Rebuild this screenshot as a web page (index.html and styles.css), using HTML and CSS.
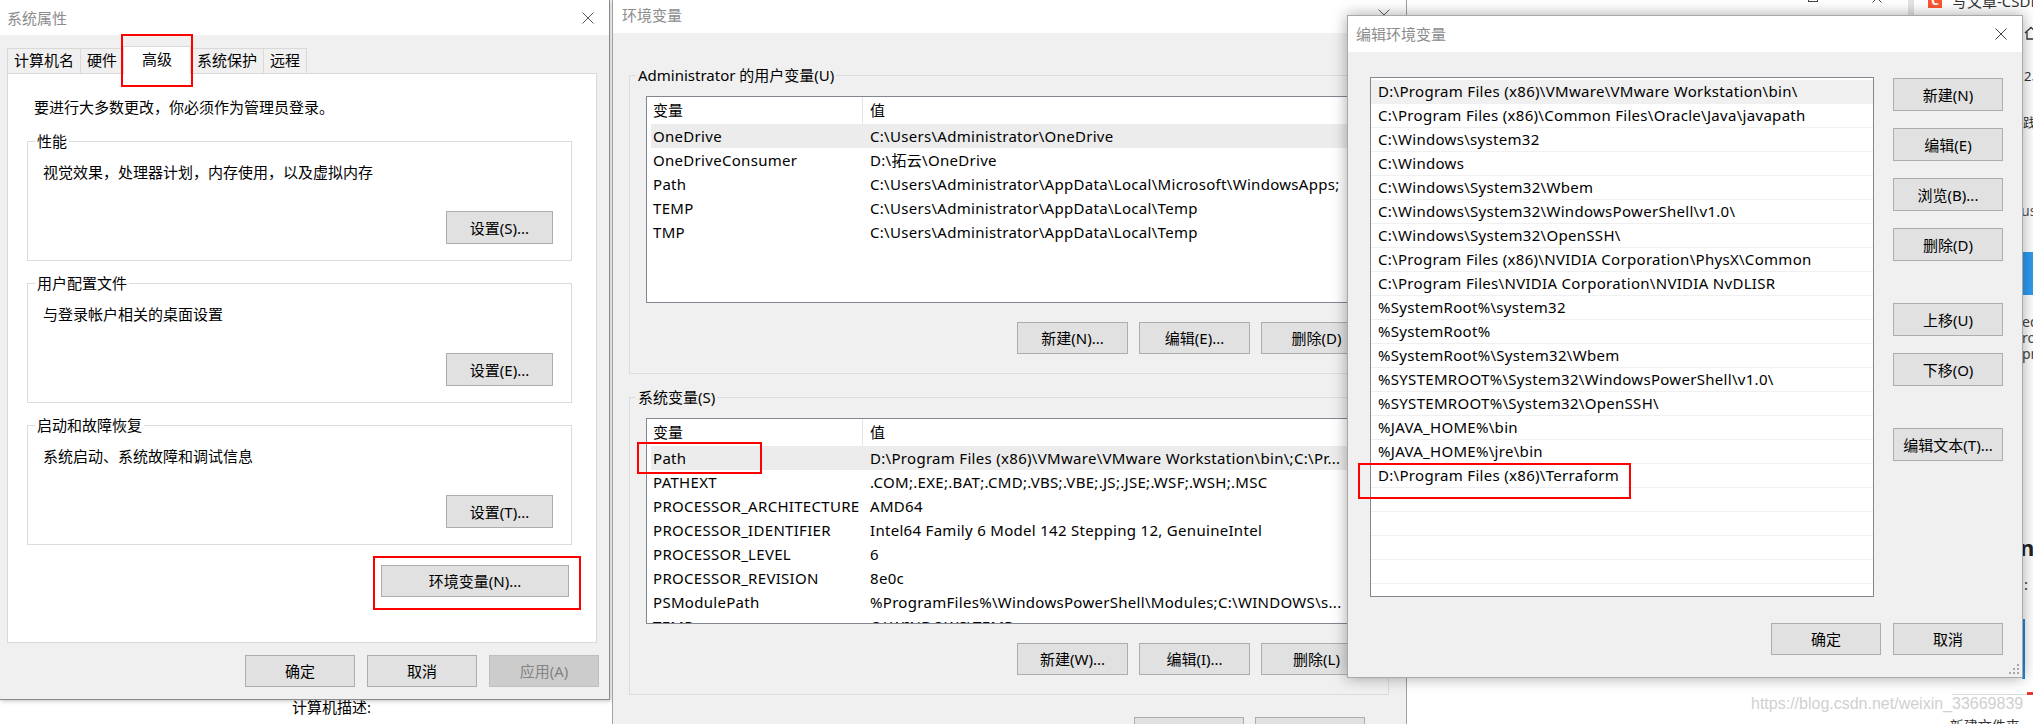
FILE: index.html
```html
<!DOCTYPE html>
<html lang="zh-CN">
<head>
<meta charset="utf-8">
<title>环境变量</title>
<link rel="stylesheet" href="styles.css">
</head>
<body>
<div class="desktop">

  <div class="bg-browser">
    <span class="frag frag-max"></span>
    <svg class="frag frag-x" viewBox="0 0 10 10"><path d="M0.5 0.5L9.5 9.5M9.5 0.5L0.5 9.5" stroke="#444" stroke-width="1" fill="none"/></svg>
    <span class="frag frag-div"></span>
    <span class="frag frag-tab"><span class="csdn-icon">C</span>写文章-CSDN博客</span>
    <svg class="frag frag-home" viewBox="0 0 16 16"><path d="M2 8L8 2.5L14 8M4 7V14H12V7" stroke="#333" stroke-width="1.3" fill="none"/></svg>
    <span class="frag frag-t1">2、</span>
    <span class="frag frag-t2">践</span>
    <span class="frag frag-t3">ush</span>
    <span class="frag frag-blue"></span>
    <span class="frag frag-t4">ed<br>ror<br>pre</span>
    <span class="frag frag-t5">nc</span>
    <span class="frag frag-t6">:</span>
    <span class="frag frag-blueline"></span>
    <span class="frag frag-line"></span>
    <span class="frag frag-red"></span>
    <span class="frag frag-t7">▪ 新建文件夹</span>
  </div>

  <div class="bg-caption">计算机描述:</div>
  <div class="watermark">https://blog.csdn.net/weixin_33669839</div>

  <!-- 系统属性 -->
  <div class="win win-sys">
    <div class="titlebar">
      <span class="title">系统属性</span>
      <svg class="close" viewBox="0 0 12 12"><path d="M0.5 0.5L11.5 11.5M11.5 0.5L0.5 11.5" stroke="#555" stroke-width="1" fill="none"/></svg>
    </div>
    <div class="sys-body">
      <div class="tabs">
        <div class="tab">计算机名</div>
        <div class="tab">硬件</div>
        <div class="tab tab-active">高级</div>
        <div class="tab">系统保护</div>
        <div class="tab">远程</div>
      </div>
      <div class="tab-panel">
        <div class="notice">要进行大多数更改，你必须作为管理员登录。</div>
        <fieldset class="group">
          <legend>性能</legend>
          <div>视觉效果，处理器计划，内存使用，以及虚拟内存</div>
          <button class="btn">设置(S)...</button>
        </fieldset>
        <fieldset class="group">
          <legend>用户配置文件</legend>
          <div>与登录帐户相关的桌面设置</div>
          <button class="btn">设置(E)...</button>
        </fieldset>
        <fieldset class="group">
          <legend>启动和故障恢复</legend>
          <div>系统启动、系统故障和调试信息</div>
          <button class="btn">设置(T)...</button>
        </fieldset>
        <button class="btn env-btn">环境变量(N)...</button>
      </div>
      <div class="sys-footer">
        <button class="btn">确定</button>
        <button class="btn">取消</button>
        <button class="btn btn-disabled">应用(A)</button>
      </div>
    </div>
  </div>

  <!-- 环境变量 -->
  <div class="win win-env">
    <div class="titlebar">
      <span class="title">环境变量</span>
      <svg class="close" viewBox="0 0 12 12"><path d="M0.5 0.5L11.5 11.5M11.5 0.5L0.5 11.5" stroke="#555" stroke-width="1" fill="none"/></svg>
    </div>
    <div class="env-body">
      <fieldset class="env-group">
        <legend>Administrator 的用户变量(U)</legend>
        <div class="varlist">
          <div class="var-head"><div class="col-name">变量</div><div class="col-value">值</div></div>
          <div class="var-row selected"><div class="col-name">OneDrive</div><div class="col-value">C:\Users\Administrator\OneDrive</div></div>
          <div class="var-row"><div class="col-name">OneDriveConsumer</div><div class="col-value">D:\拓云\OneDrive</div></div>
          <div class="var-row"><div class="col-name">Path</div><div class="col-value">C:\Users\Administrator\AppData\Local\Microsoft\WindowsApps;</div></div>
          <div class="var-row"><div class="col-name">TEMP</div><div class="col-value">C:\Users\Administrator\AppData\Local\Temp</div></div>
          <div class="var-row"><div class="col-name">TMP</div><div class="col-value">C:\Users\Administrator\AppData\Local\Temp</div></div>
        </div>
        <div class="env-actions">
          <button class="btn">新建(N)...</button>
          <button class="btn">编辑(E)...</button>
          <button class="btn">删除(D)</button>
        </div>
      </fieldset>
      <fieldset class="env-group">
        <legend>系统变量(S)</legend>
        <div class="varlist varlist-sys">
          <div class="var-head"><div class="col-name">变量</div><div class="col-value">值</div></div>
          <div class="var-row selected"><div class="col-name">Path</div><div class="col-value">D:\Program Files (x86)\VMware\VMware Workstation\bin\;C:\Pr...</div></div>
          <div class="var-row"><div class="col-name">PATHEXT</div><div class="col-value">.COM;.EXE;.BAT;.CMD;.VBS;.VBE;.JS;.JSE;.WSF;.WSH;.MSC</div></div>
          <div class="var-row"><div class="col-name">PROCESSOR_ARCHITECTURE</div><div class="col-value">AMD64</div></div>
          <div class="var-row"><div class="col-name">PROCESSOR_IDENTIFIER</div><div class="col-value">Intel64 Family 6 Model 142 Stepping 12, GenuineIntel</div></div>
          <div class="var-row"><div class="col-name">PROCESSOR_LEVEL</div><div class="col-value">6</div></div>
          <div class="var-row"><div class="col-name">PROCESSOR_REVISION</div><div class="col-value">8e0c</div></div>
          <div class="var-row"><div class="col-name">PSModulePath</div><div class="col-value">%ProgramFiles%\WindowsPowerShell\Modules;C:\WINDOWS\s...</div></div>
          <div class="var-row"><div class="col-name">TEMP</div><div class="col-value">C:\WINDOWS\TEMP</div></div>
        </div>
        <div class="env-actions">
          <button class="btn">新建(W)...</button>
          <button class="btn">编辑(I)...</button>
          <button class="btn">删除(L)</button>
        </div>
      </fieldset>
      <div class="env-footer">
        <button class="btn">确定</button>
        <button class="btn">取消</button>
      </div>
    </div>
  </div>

  <!-- 编辑环境变量 -->
  <div class="win win-edit">
    <div class="titlebar">
      <span class="title">编辑环境变量</span>
      <svg class="close" viewBox="0 0 12 12"><path d="M0.5 0.5L11.5 11.5M11.5 0.5L0.5 11.5" stroke="#444" stroke-width="1" fill="none"/></svg>
    </div>
    <div class="edit-body">
      <div class="edit-main">
        <div class="pathlist">
          <div class="path-row selected">D:\Program Files (x86)\VMware\VMware Workstation\bin\</div>
          <div class="path-row">C:\Program Files (x86)\Common Files\Oracle\Java\javapath</div>
          <div class="path-row">C:\Windows\system32</div>
          <div class="path-row">C:\Windows</div>
          <div class="path-row">C:\Windows\System32\Wbem</div>
          <div class="path-row">C:\Windows\System32\WindowsPowerShell\v1.0\</div>
          <div class="path-row">C:\Windows\System32\OpenSSH\</div>
          <div class="path-row">C:\Program Files (x86)\NVIDIA Corporation\PhysX\Common</div>
          <div class="path-row">C:\Program Files\NVIDIA Corporation\NVIDIA NvDLISR</div>
          <div class="path-row">%SystemRoot%\system32</div>
          <div class="path-row">%SystemRoot%</div>
          <div class="path-row">%SystemRoot%\System32\Wbem</div>
          <div class="path-row">%SYSTEMROOT%\System32\WindowsPowerShell\v1.0\</div>
          <div class="path-row">%SYSTEMROOT%\System32\OpenSSH\</div>
          <div class="path-row">%JAVA_HOME%\bin</div>
          <div class="path-row">%JAVA_HOME%\jre\bin</div>
          <div class="path-row">D:\Program Files (x86)\Terraform</div>
          <div class="path-row"></div>
          <div class="path-row"></div>
          <div class="path-row"></div>
          <div class="path-row"></div>
        </div>
        <div class="btn-col">
          <button class="btn">新建(N)</button>
          <button class="btn">编辑(E)</button>
          <button class="btn">浏览(B)...</button>
          <button class="btn">删除(D)</button>
          <button class="btn gap-before">上移(U)</button>
          <button class="btn">下移(O)</button>
          <button class="btn gap-before">编辑文本(T)...</button>
        </div>
      </div>
      <div class="edit-footer">
        <button class="btn">确定</button>
        <button class="btn">取消</button>
      </div>
    </div>
    <svg class="grip" viewBox="0 0 10 10"><g fill="#a8a8a8"><rect x="8" y="0" width="2" height="2"/><rect x="4" y="4" width="2" height="2"/><rect x="8" y="4" width="2" height="2"/><rect x="0" y="8" width="2" height="2"/><rect x="4" y="8" width="2" height="2"/><rect x="8" y="8" width="2" height="2"/></g></svg>
  </div>

  <div class="mark mark-tab"></div>
  <div class="mark mark-envbtn"></div>
  <div class="mark mark-path"></div>
  <div class="mark mark-terraform"></div>
</div>
</body>
</html>
```

FILE: styles.css
```css
* { box-sizing: border-box; }
html, body { margin: 0; padding: 0; }
body {
  width: 2033px;
  height: 724px;
  overflow: hidden;
  background: #fff;
  font-family: "Noto Sans", "Noto Sans CJK SC", sans-serif;
  font-size: 15px;
  line-height: 20px;
  color: #000;
}
.desktop { position: relative; width: 2033px; height: 724px; overflow: hidden; background: #fff; }

/* generic window */
.win { position: absolute; display: flex; flex-direction: column; background: #f0f0f0; }
.win-sys { left: 0; top: 0; width: 610px; height: 700px; border-right: 1px solid #8a8a8a; border-bottom: 1px solid #8a8a8a; box-shadow: 1px 1px 4px rgba(0,0,0,.25); z-index: 1; }
.win-env { left: 612px; top: 0; width: 795px; height: 780px; border-left: 1px solid #a0a0a0; border-right: 1px solid #a0a0a0; z-index: 2; }
.win-edit { left: 1347px; top: 15px; width: 676px; height: 663px; border: 1px solid #a8a8a8; box-shadow: 0 0 14px rgba(0,0,0,.35); z-index: 4; }

.titlebar { flex: none; display: flex; align-items: center; justify-content: space-between; background: #fff; }
.title { color: #8c8c8c; }
.close { width: 12px; height: 12px; display: block; }
.win-sys .titlebar { height: 35px; padding: 0 15px 0 7px; }
.win-env .titlebar { height: 33px; padding: 0 16px 3px 9px; }
.win-edit .titlebar { height: 36px; padding: 0 15px 0 8px; }

/* buttons */
.btn {
  display: flex; align-items: center; justify-content: center;
  height: 33px; padding: 0; margin: 0;
  border: 1px solid #adadad; background: #e1e1e1;
  font: inherit; color: #000; line-height: 20px;
}
.btn-disabled { background: #cccccc; border-color: #bfbfbf; color: #838383; }

/* 系统属性 */
.sys-body { flex: 1; display: flex; flex-direction: column; padding: 11px 10px 0 7px; }
.tabs { display: flex; align-items: flex-end; height: 27px; position: relative; z-index: 1; }
.tab { height: 25px; padding: 0 6px; border: 1px solid #d9d9d9; border-bottom: none; border-right: none; background: #f0f0f0; line-height: 23px; white-space: nowrap; }
.tab:last-child { border-right: 1px solid #d9d9d9; }
.tab-active { height: 28px; margin-bottom: -1px; background: #fff; border-right: 1px solid #d9d9d9; padding: 0 18px; line-height: 24px; }
.tab-active + .tab { border-left: none; }
.tab-panel { height: 570px; margin-right: 2px; background: #fff; border: 1px solid #d9d9d9; padding: 23px 24px 0 19px; display: flex; flex-direction: column; }
.notice { margin-left: 7px; }
.group { margin: 14px 0 0; padding: 11px 18px 16px 15px; border: 1px solid #dcdcdc; min-width: 0; display: flex; flex-direction: column; }
.group + .group { margin-top: 12px; }
.group legend, .env-group legend { padding: 0 2px; line-height: 20px; }
.group legend { margin-left: -8px; }
.group .btn { align-self: flex-end; margin-top: 29px; width: 107px; }
.env-btn { align-self: flex-end; margin: 20px 3px 0 0; width: 188px; height: 32px; }
.sys-footer { display: flex; justify-content: flex-end; gap: 12px; margin-top: 12px; }
.sys-footer .btn { width: 110px; height: 32px; }

/* 环境变量 */
.env-body { flex: 1; display: flex; flex-direction: column; padding: 32px 17px 0 16px; }
.env-group { margin: 0; padding: 11px 16px 19px; border: 1px solid #dcdcdc; min-width: 0; display: flex; flex-direction: column; }
.env-group + .env-group { margin-top: 13px; }
.env-group legend { margin-left: -10px; }
.varlist { height: 207px; background: #fff; border: 1px solid #828790; padding-left: 4px; overflow: hidden; }
.varlist-sys { height: 206px; }
.var-head, .var-row { display: flex; white-space: nowrap; }
.var-head { height: 27px; line-height: 26px; }
.var-row { height: 24px; line-height: 24px; letter-spacing: 0.3px; }
.col-name { flex: none; width: 212px; padding-left: 2px; overflow: hidden; }
.var-head .col-name { border-right: 1px solid #e5e5e5; }
.col-value { flex: 1; min-width: 0; padding-left: 7px; overflow: hidden; }
.var-row.selected { background: #ececec; }
.env-actions { display: flex; justify-content: flex-end; gap: 11px; margin-top: 19px; }
.env-actions .btn { width: 111px; height: 32px; }
.env-footer { display: flex; justify-content: flex-end; gap: 11px; margin: 22px 24px 0 0; }
.env-footer .btn { width: 110px; }

/* 编辑环境变量 */
.edit-body { flex: 1; display: flex; flex-direction: column; padding: 25px 19px 22px 22px; }
.edit-main { display: flex; gap: 19px; }
.pathlist { width: 504px; height: 520px; background: #fff; border: 1px solid #828790; padding-top: 2px; overflow: hidden; }
.path-row { height: 24px; line-height: 23px; padding-left: 7px; border-bottom: 1px solid #f0f0f0; white-space: nowrap; letter-spacing: 0.3px; }
.path-row.selected { background: #f0f0f0; }
.btn-col { display: flex; flex-direction: column; gap: 17px; padding-top: 1px; width: 110px; }
.btn-col .btn { width: 110px; }
.btn-col .gap-before { margin-top: 25px; }
.edit-footer { display: flex; justify-content: flex-end; gap: 12px; margin-top: 26px; }
.edit-footer .btn { width: 110px; height: 32px; }
.grip { position: absolute; right: 3px; bottom: 3px; width: 10px; height: 10px; }

/* annotations */
.mark { position: absolute; border: 2px solid #ff0000; z-index: 10; }
.mark-tab { left: 121px; top: 34px; width: 72px; height: 53px; }
.mark-envbtn { left: 373px; top: 556px; width: 208px; height: 54px; }
.mark-path { left: 637px; top: 442px; width: 125px; height: 32px; }
.mark-terraform { left: 1358px; top: 463px; width: 273px; height: 36px; }

/* background */
.bg-caption { position: absolute; left: 292px; top: 697px; }
.watermark { position: absolute; left: 1751px; top: 694px; font-family: "Liberation Sans", sans-serif; font-size: 16px; line-height: 20px; color: #d0d0d0; z-index: 5; }
.bg-browser { position: absolute; left: 1407px; top: 0; width: 626px; height: 724px; background: #fff; }
.frag { position: absolute; display: block; white-space: nowrap; }
.frag-max { left: 401px; top: -8px; width: 10px; height: 10px; border: 1px solid #444; }
.frag-x { left: 465px; top: -7px; width: 10px; height: 10px; }
.frag-div { left: 501px; top: 0; width: 6px; height: 16px; background: #e3e3e3; }
.frag-tab { left: 521px; top: -7px; display: flex; align-items: center; gap: 10px; color: #333; line-height: 16px; }
.csdn-icon { width: 14px; height: 14px; background: #fc5531; color: #fff; font-size: 12px; font-weight: bold; line-height: 14px; text-align: center; }
.frag-home { left: 616px; top: 25px; width: 16px; height: 16px; }
.frag-t1 { left: 617px; top: 66px; font-size: 13px; color: #333; }
.frag-t2 { left: 616px; top: 112px; font-size: 13px; color: #333; }
.frag-t3 { left: 614px; top: 201px; font-size: 14px; color: #555; }
.frag-blue { left: 615px; top: 252px; width: 11px; height: 43px; background: #2d9bf0; }
.frag-t4 { left: 615px; top: 314px; font-size: 14px; line-height: 16px; color: #444; }
.frag-t5 { left: 613px; top: 533px; font-size: 22px; line-height: 28px; font-weight: bold; color: #222; }
.frag-t6 { left: 617px; top: 574px; font-size: 15px; color: #333; }
.frag-blueline { left: 615px; top: 619px; width: 3px; height: 60px; background: #1e88e5; }
.frag-line { left: 545px; top: 694px; width: 81px; height: 1px; background: #dcdcdc; }
.frag-red { left: 620px; top: 692px; width: 6px; height: 3px; background: #e53935; }
.frag-t7 { left: 525px; top: 716px; font-size: 14px; color: #333; }
```
